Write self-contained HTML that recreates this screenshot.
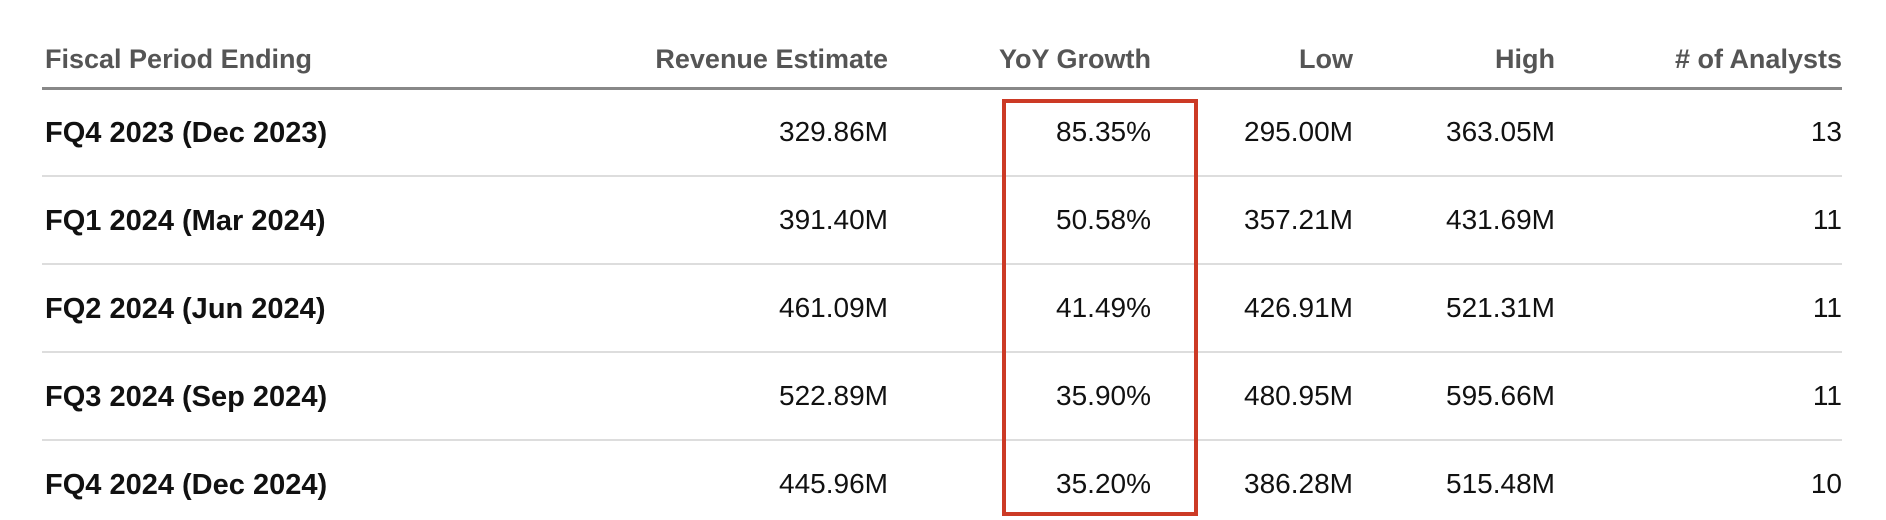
<!DOCTYPE html>
<html><head><style>
body{margin:0;width:1886px;height:520px;background:#fff;font-family:"Liberation Sans",sans-serif;position:relative;overflow:hidden}
.t{position:absolute;white-space:nowrap;line-height:1}
.h{font-weight:bold;font-size:27px;color:#555;top:46px}
.c{font-size:28px;color:#111;}
.b{font-weight:bold;font-size:29px;margin-top:1px}
.r{text-align:right}
.line{position:absolute;left:42px;width:1800px;height:2px;background:#ddd}
</style></head><body>
<div class="line" style="top:87px;height:3px;background:#888"></div>
<div class="line" style="top:175px"></div>
<div class="line" style="top:263px"></div>
<div class="line" style="top:351px"></div>
<div class="line" style="top:439px"></div>
<div style="position:absolute;left:1002px;top:99px;width:188px;height:409px;border:4px solid #cc3a25"></div>

<div class="t h" style="left:45px">Fiscal Period Ending</div>
<div class="t h r" style="right:998px">Revenue Estimate</div>
<div class="t h r" style="right:735px">YoY Growth</div>
<div class="t h r" style="right:533px">Low</div>
<div class="t h r" style="right:331px">High</div>
<div class="t h r" style="right:44px"># of Analysts</div>

<div style="position:absolute;left:0;top:118px;width:1886px">
<div class="t c b" style="left:45px">FQ4 2023 (Dec 2023)</div>
<div class="t c r" style="right:998px">329.86M</div>
<div class="t c r" style="right:735px">85.35%</div>
<div class="t c r" style="right:533px">295.00M</div>
<div class="t c r" style="right:331px">363.05M</div>
<div class="t c r" style="right:44px">13</div>
</div>
<div style="position:absolute;left:0;top:206px;width:1886px">
<div class="t c b" style="left:45px">FQ1 2024 (Mar 2024)</div>
<div class="t c r" style="right:998px">391.40M</div>
<div class="t c r" style="right:735px">50.58%</div>
<div class="t c r" style="right:533px">357.21M</div>
<div class="t c r" style="right:331px">431.69M</div>
<div class="t c r" style="right:44px">11</div>
</div>
<div style="position:absolute;left:0;top:294px;width:1886px">
<div class="t c b" style="left:45px">FQ2 2024 (Jun 2024)</div>
<div class="t c r" style="right:998px">461.09M</div>
<div class="t c r" style="right:735px">41.49%</div>
<div class="t c r" style="right:533px">426.91M</div>
<div class="t c r" style="right:331px">521.31M</div>
<div class="t c r" style="right:44px">11</div>
</div>
<div style="position:absolute;left:0;top:382px;width:1886px">
<div class="t c b" style="left:45px">FQ3 2024 (Sep 2024)</div>
<div class="t c r" style="right:998px">522.89M</div>
<div class="t c r" style="right:735px">35.90%</div>
<div class="t c r" style="right:533px">480.95M</div>
<div class="t c r" style="right:331px">595.66M</div>
<div class="t c r" style="right:44px">11</div>
</div>
<div style="position:absolute;left:0;top:470px;width:1886px">
<div class="t c b" style="left:45px">FQ4 2024 (Dec 2024)</div>
<div class="t c r" style="right:998px">445.96M</div>
<div class="t c r" style="right:735px">35.20%</div>
<div class="t c r" style="right:533px">386.28M</div>
<div class="t c r" style="right:331px">515.48M</div>
<div class="t c r" style="right:44px">10</div>
</div>
</body></html>
